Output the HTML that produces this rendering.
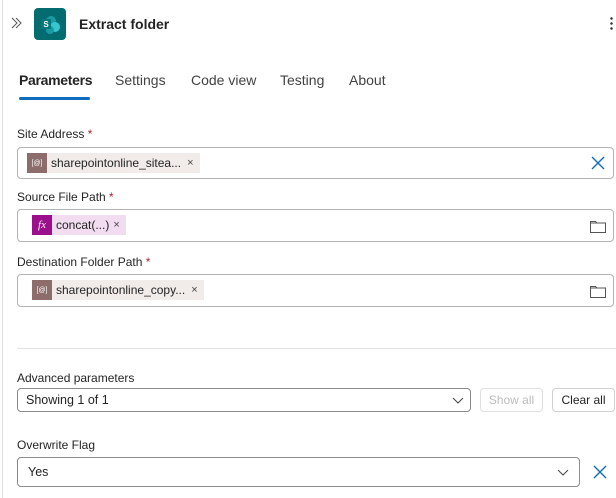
<!DOCTYPE html><html><head><style>
body{margin:0;width:616px;height:498px;background:#fff;font-family:"Liberation Sans",sans-serif;color:#242424;position:relative;overflow:hidden}
.a{position:absolute}
.lbl{font-size:12px;color:#242424}
.lbl i{font-style:normal;color:#a4262c}
.box{position:absolute;left:17px;width:597px;border:1px solid #b3b3b3;border-radius:4px;box-sizing:border-box}
.tok{position:absolute;top:5px;height:20px;display:flex;align-items:center;font-size:12px;color:#242424}
.ic{width:20px;height:20px;display:flex;align-items:center;justify-content:center;color:#fff;font-size:7px}
.x{font-size:11px;margin:0 6px 0 6px;color:#444}
.tab{position:absolute;top:72px;font-size:14px;color:#424242}
.btn{position:absolute;top:388px;height:24px;border:1px solid #d1d1d1;border-radius:4px;box-sizing:border-box;font-size:12px;display:flex;align-items:center;justify-content:center}
</style></head><body>
<div class="a" style="left:2px;top:0;width:1px;height:498px;background:#e0e0e0"></div>
<svg class="a" style="left:11px;top:17px" width="12" height="12"><path d="M1 1l5 5-5 5M5 1l5 5-5 5" fill="none" stroke="#555" stroke-width="1"/></svg>
<div class="a" style="left:34px;top:8px;width:32px;height:32px;border-radius:4px;background:#036c70">
<svg width="32" height="32"><circle cx="17" cy="13" r="5" fill="#1a9ba1"/><circle cx="21" cy="19" r="5" fill="#37c6d0"/><circle cx="16" cy="22" r="4" fill="#1a9ba1"/><rect x="7" y="11" width="10" height="10" rx="1" fill="#03787c"/><text x="12" y="19" font-size="8" font-weight="bold" fill="#fff" text-anchor="middle" font-family="Liberation Sans">S</text></svg></div>
<div class="a" style="left:79px;top:16px;font-size:14px;font-weight:bold">Extract folder</div>
<div class="a" style="left:610px;top:16px;width:3px;height:14px;background:radial-gradient(circle,#333 1px,transparent 1.5px) 0 0/3px 5px"></div>
<div class="tab" style="left:19px;color:#242424;font-weight:bold;letter-spacing:-0.3px">Parameters</div>
<div class="a" style="left:19px;top:97px;width:71px;height:3px;background:#0f6cbd;border-radius:2px"></div>
<div class="tab" style="left:115px">Settings</div>
<div class="tab" style="left:191px">Code view</div>
<div class="tab" style="left:280px">Testing</div>
<div class="tab" style="left:349px">About</div>

<div class="a lbl" style="left:17px;top:127px">Site Address <i>*</i></div>
<div class="box" style="top:147px;height:32px">
<div class="tok" style="left:9px;background:#f1ebea"><div class="ic" style="background:#8c6d6b">[@]</div><span style="margin-left:4px">sharepointonline_sitea...</span><span class="x">×</span></div>
<svg class="a" style="right:8px;top:8px" width="14" height="14"><path d="M1 1L13 13M13 1L1 13" stroke="#0f6cbd" stroke-width="1.4"/></svg></div>

<div class="a lbl" style="left:17px;top:190px">Source File Path <i>*</i></div>
<div class="box" style="top:209px;height:33px">
<div class="tok" style="left:14px;background:#f2dcef"><div class="ic" style="background:#9c0f8c;font-size:11px;font-style:italic;font-family:'Liberation Serif'">fx</div><span style="margin-left:4px">concat(...)</span><span class="x" style="margin-left:4px">×</span></div>
<svg class="a" style="right:6px;top:8px" width="18" height="16"><path d="M1.5 3.5h5l1.5 1.5h8.5v9.5h-15z M1.5 5h6" fill="none" stroke="#555" stroke-width="1"/></svg></div>

<div class="a lbl" style="left:17px;top:255px">Destination Folder Path <i>*</i></div>
<div class="box" style="top:274px;height:33px">
<div class="tok" style="left:14px;background:#f1ebea"><div class="ic" style="background:#8c6d6b">[@]</div><span style="margin-left:4px">sharepointonline_copy...</span><span class="x">×</span></div>
<svg class="a" style="right:6px;top:8px" width="18" height="16"><path d="M1.5 3.5h5l1.5 1.5h8.5v9.5h-15z M1.5 5h6" fill="none" stroke="#555" stroke-width="1"/></svg></div>

<div class="a" style="left:17px;top:348px;width:599px;height:1px;background:#e0e0e0"></div>
<div class="a lbl" style="left:17px;top:371px">Advanced parameters</div>
<div class="a" style="left:17px;top:388px;width:454px;height:24px;border:1px solid #8a8a8a;border-radius:4px;box-sizing:border-box;font-size:12.5px;padding:4px 8px">Showing 1 of 1
<svg class="a" style="right:6px;top:8px" width="12" height="8"><path d="M1 1l5 5 5-5" fill="none" stroke="#444" stroke-width="1"/></svg></div>
<div class="btn" style="left:480px;width:63px;color:#bdbdbd;border-color:#e0e0e0">Show all</div>
<div class="btn" style="left:552px;width:63px;color:#242424">Clear all</div>

<div class="a lbl" style="left:17px;top:438px">Overwrite Flag</div>
<div class="a" style="left:17px;top:457px;width:563px;height:30px;border:1px solid #8a8a8a;border-radius:4px;box-sizing:border-box;font-size:12.5px;padding:7px 10px">Yes
<svg class="a" style="right:10px;top:11px" width="12" height="8"><path d="M1 1l5 5 5-5" fill="none" stroke="#444" stroke-width="1"/></svg></div>
<svg class="a" style="left:593px;top:465px" width="14" height="14"><path d="M1 1L13 13M13 1L1 13" stroke="#0f6cbd" stroke-width="1.4"/></svg>
</body></html>
